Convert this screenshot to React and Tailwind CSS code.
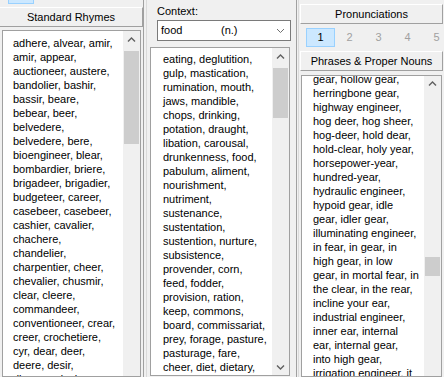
import React from 'react';

const standard = [
  'adhere, alvear, amir,',
  'amir, appear,',
  'auctioneer, austere,',
  'bandolier, bashir,',
  'bassir, beare,',
  'bebear, beer,',
  'belvedere,',
  'belvedere, bere,',
  'bioengineer, blear,',
  'bombardier, briere,',
  'brigadeer, brigadier,',
  'budgeteer, career,',
  'casebeer, casebeer,',
  'cashier, cavalier,',
  'chachere,',
  'chandelier,',
  'charpentier, cheer,',
  'chevalier, chusmir,',
  'clear, cleere,',
  'commandeer,',
  'conventioneer, crear,',
  'creer, crochetiere,',
  'cyr, dear, deer,',
  'deere, desir,',
  'dicenzo, desiree,',
];

const context = [
  'eating, deglutition,',
  'gulp, mastication,',
  'rumination, mouth,',
  'jaws, mandible,',
  'chops, drinking,',
  'potation, draught,',
  'libation, carousal,',
  'drunkenness, food,',
  'pabulum, aliment,',
  'nourishment,',
  'nutriment,',
  'sustenance,',
  'sustentation,',
  'sustention, nurture,',
  'subsistence,',
  'provender, corn,',
  'feed, fodder,',
  'provision, ration,',
  'keep, commons,',
  'board, commissariat,',
  'prey, forage, pasture,',
  'pasturage, fare,',
  'cheer, diet, dietary,',
];

const phrases = [
  'gear, hollow gear,',
  'herringbone gear,',
  'highway engineer,',
  'hog deer, hog sheer,',
  'hog-deer, hold dear,',
  'hold-clear, holy year,',
  'horsepower-year,',
  'hundred-year,',
  'hydraulic engineer,',
  'hypoid gear, idle',
  'gear, idler gear,',
  'illuminating engineer,',
  'in fear, in gear, in',
  'high gear, in low',
  'gear, in mortal fear, in',
  'the clear, in the rear,',
  'incline your ear,',
  'industrial engineer,',
  'inner ear, internal',
  'ear, internal gear,',
  'into high gear,',
  'irrigation engineer, it',
  'is clear,',
];

function Chevron({ down }) {
  return (
    <svg width="9" height="6" viewBox="0 0 9 6">
      <path
        d={down ? 'M1 1.5 L4.5 5 L8 1.5' : 'M1 4.5 L4.5 1 L8 4.5'}
        fill="none"
        stroke="#606060"
        strokeWidth="1.4"
      />
    </svg>
  );
}

function ListBox({ lines, className, pad, thumbTop, thumbH, showDown }) {
  return (
    <div className={`flex bg-white border border-[#a0a0a0] overflow-hidden ${className}`}>
      <div className={`flex-1 overflow-hidden ${pad}`}>
        {lines.map((l, i) => (
          <div key={i} className="whitespace-nowrap leading-[14px] h-[14px]">{l}</div>
        ))}
      </div>
      <div className="w-[17px] shrink-0 bg-[#f0f0f0] flex flex-col">
        <div className="h-[17px] flex items-center justify-center">
          <Chevron />
        </div>
        <div className="bg-[#cdcdcd] mx-[1px]" style={{ marginTop: thumbTop, height: thumbH }} />
        {showDown && (
          <div className="h-[17px] mt-auto flex items-center justify-center">
            <Chevron down />
          </div>
        )}
      </div>
    </div>
  );
}

function Button({ children, className }) {
  return (
    <div
      className={`h-[21px] flex items-center justify-center bg-[#f0f0f0] border-b border-r border-[#a0a0a0] ${className}`}
    >
      {children}
    </div>
  );
}

export default function App() {
  return (
    <div
      className="w-[444px] h-[377px] overflow-hidden bg-[#f0f0f0] flex text-[11px] text-black"
      style={{ fontFamily: '"Liberation Sans", Arial, sans-serif' }}
    >
      {/* Standard rhymes */}
      <div className="w-[144px] shrink-0 flex flex-col border-r border-[#a0a0a0]">
        <div className="h-[4px] ml-[8px] w-[26px] bg-[#cce8ff] border-x border-b border-[#99d1ff]" />
        <Button className="mt-[3px] w-[143px] border-t-white border-t">Standard Rhymes</Button>
        <ListBox
          lines={standard}
          className="mt-[3px] ml-[2px] w-[139px] h-[360px]"
          pad="pl-[10px] pt-[5px]"
          thumbTop={3}
          thumbH={93}
        />
      </div>

      {/* Context */}
      <div className="w-[151px] shrink-0 flex flex-col border-l border-[#dadada] border-r border-r-[#a0a0a0] ml-[2px]">
        <div className="pl-[10px] pt-[5px] h-[20px] leading-[13px]">Context:</div>
        <div className="ml-[10px] w-[134px] h-[21px] bg-white border border-[#7a7a7a] flex items-center pl-[3px] pr-[5px]">
          <span className="w-[60px]">food</span>
          <span className="flex-1">(n.)</span>
          <svg width="9" height="6" viewBox="0 0 9 6">
            <path d="M1 1 L4.5 4.5 L8 1" fill="none" stroke="#707070" strokeWidth="1" />
          </svg>
        </div>
        <ListBox
          lines={context}
          className="mt-[6px] ml-[3px] w-[140px] h-[329px]"
          pad="pl-[12px] pt-[4px]"
          thumbTop={3}
          thumbH={50}
          showDown
        />
      </div>

      {/* Pronunciations / phrases */}
      <div className="flex-1 flex flex-col border-l border-[#dadada] ml-[1px]">
        <Button className="mt-[4px] ml-[1px] w-[143px] border-t border-l border-t-white border-l-white">
          Pronunciations
        </Button>
        <div className="flex mt-[4px] ml-[7px] h-[20px]">
          <div className="w-[29px] shrink-0 flex items-center justify-center bg-[#cce8ff] border border-[#99d1ff]">1</div>
          {['2', '3', '4', '5'].map((n) => (
            <div key={n} className="w-[29px] shrink-0 flex items-center justify-center text-[#a0a0a0]">{n}</div>
          ))}
        </div>
        <Button className="mt-[4px] ml-[1px] w-[143px] border-t border-l border-t-white border-l-white">
          Phrases &amp; Proper Nouns
        </Button>
        <ListBox
          lines={phrases}
          className="mt-[4px] ml-[2px] w-[141px] h-[320px]"
          pad="pl-[11px] -mt-[4px]"
          thumbTop={164}
          thumbH={19}
        />
      </div>
    </div>
  );
}
